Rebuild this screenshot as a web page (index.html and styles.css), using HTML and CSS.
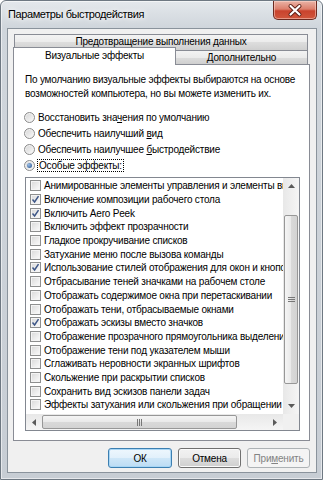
FILE: index.html
```html
<!DOCTYPE html>
<html lang="ru">
<head>
  <meta charset="UTF-8">
  <title>Параметры быстродействия</title>
  <link rel="stylesheet" href="styles.css">
</head>
<body>
  <div class="window">
    <div class="titlebar">
      <span class="title">Параметры быстродействия</span>
      <div class="close">
        <svg width="44" height="19" viewBox="0 0 44 19">
          <path d="M17.5 5 L26.5 13.5 M26.5 5 L17.5 13.5" stroke="#5a1d14" stroke-width="4" stroke-linecap="round"/>
          <path d="M17.5 5 L26.5 13.5 M26.5 5 L17.5 13.5" stroke="#fff" stroke-width="2.2" stroke-linecap="round"/>
        </svg>
      </div>
    </div>

    <div class="client">
      <div class="tabs">
        <div class="tab back">Предотвращение выполнения данных</div>
        <div class="tab-row">
          <div class="tab active">Визуальные эффекты</div>
          <div class="tab side">Дополнительно</div>
        </div>
      </div>

      <div class="panel">
        <p class="intro">По умолчанию визуальные эффекты выбираются на основе<br>возможностей компьютера, но вы можете изменить их.</p>

        <div class="radios">
          <div class="radio"><span class="dot"></span><span>Восстановить зна<u>ч</u>ения по умолчанию</span></div>
          <div class="radio"><span class="dot"></span><span>Обеспечить наилучший <u>в</u>ид</span></div>
          <div class="radio"><span class="dot"></span><span>Обеспечить наилучшее <u>б</u>ыстродействие</span></div>
          <div class="radio on"><span class="dot"></span><span class="focus">Особые эффекты:</span></div>
        </div>

        <div class="list">
          <div class="list-main">
            <div class="items" id="items"></div>
            <div class="vscroll">
              <div class="arrow"><svg width="7" height="4" viewBox="0 0 7 4"><polygon points="0,4 3.5,0 7,4" fill="#5a5a5a"/></svg></div>
              <div class="track">
                <div class="thumb vthumb">
                  <svg width="7" height="5" viewBox="0 0 7 5"><path d="M0 0.5H7M0 2.5H7M0 4.5H7" stroke="#777" stroke-width="1"/></svg>
                </div>
              </div>
              <div class="arrow"><svg width="7" height="4" viewBox="0 0 7 4"><polygon points="0,0 7,0 3.5,4" fill="#5a5a5a"/></svg></div>
            </div>
          </div>
          <div class="hscroll">
            <div class="arrow"><svg width="4" height="7" viewBox="0 0 4 7"><polygon points="4,0 4,7 0,3.5" fill="#5a5a5a"/></svg></div>
            <div class="track">
              <div class="thumb hthumb">
                <svg width="5" height="7" viewBox="0 0 5 7"><path d="M0.5 0V7M2.5 0V7M4.5 0V7" stroke="#777" stroke-width="1"/></svg>
              </div>
            </div>
            <div class="arrow"><svg width="4" height="7" viewBox="0 0 4 7"><polygon points="0,0 4,3.5 0,7" fill="#5a5a5a"/></svg></div>
            <div class="corner"></div>
          </div>
        </div>
      </div>

      <div class="buttons">
        <button class="btn default">ОК</button>
        <button class="btn">Отмена</button>
        <button class="btn" disabled>При<u>м</u>енить</button>
      </div>
    </div>
  </div>

  <script>
    const effects = [
      { t: "Анимированные элементы управления и элементы внутри окна", on: false },
      { t: "Включение композиции рабочего стола", on: true },
      { t: "Включить Aero Peek", on: true },
      { t: "Включить эффект прозрачности", on: false },
      { t: "Гладкое прокручивание списков", on: false },
      { t: "Затухание меню после вызова команды", on: false },
      { t: "Использование стилей отображения для окон и кнопок", on: true },
      { t: "Отбрасывание теней значками на рабочем столе", on: false },
      { t: "Отображать содержимое окна при перетаскивании", on: false },
      { t: "Отображать тени, отбрасываемые окнами", on: false },
      { t: "Отображать эскизы вместо значков", on: true },
      { t: "Отображение прозрачного прямоугольника выделения", on: false },
      { t: "Отображение тени под указателем мыши", on: false },
      { t: "Сглаживать неровности экранных шрифтов", on: false },
      { t: "Скольжение при раскрытии списков", on: false },
      { t: "Сохранить вид эскизов панели задач", on: false },
      { t: "Эффекты затухания или скольжения при обращении к меню", on: false }
    ];

    const tick = '<svg width="9" height="9" viewBox="0 0 9 9"><path d="M1.5 4.5 L3.6 7 L7.5 1.2" stroke="#3d5687" stroke-width="1.5" fill="none"/></svg>';
    const list = document.getElementById('items');
    effects.forEach(e => {
      const row = document.createElement('div');
      row.className = 'item';
      row.innerHTML = `<span class="box">${e.on ? tick : ''}</span><span class="label">${e.t}</span>`;
      list.appendChild(row);
    });
  </script>
</body>
</html>
```

FILE: styles.css
```css
* {
  box-sizing: border-box;
}
body {
  margin: 0;
  font-family: "Liberation Sans", Arial, sans-serif;
  font-size: 10px;
  letter-spacing: -0.2px;
  color: #000;
  background: #fff;
}
.window {
  width: 323px;
  height: 480px;
  border: 1px solid #6e7882;
  border-radius: 6px 6px 0 0;
  background: linear-gradient(180deg, #e4e8ec 0, #d0d6dc 26px, #c7cdd4 100%);
  box-shadow: inset 0 0 0 1px rgba(255,255,255,0.55);
  padding: 0 5px 6px 6px;
  display: flex;
  flex-direction: column;
}
.titlebar {
  height: 27px;
  display: flex;
  align-items: flex-start;
}
.title {
  margin: 6px 0 0 1px;
  font-size: 11px;
  line-height: 14px;
  letter-spacing: -0.4px;
  text-shadow: 0 0 5px #fff, 0 0 8px #fff;
}
.close {
  margin-left: auto;
  width: 44px;
  height: 19px;
  border: 1px solid #6c2a20;
  border-top: none;
  border-radius: 0 0 5px 5px;
  background: linear-gradient(180deg, #eab3a6 0, #dc7f6c 45%, #c9432d 55%, #d0563c 100%);
  box-shadow: inset 0 0 0 1px rgba(255,220,210,0.5);
}
.close svg {
  display: block;
  margin-left: -1px;
}

.client {
  flex: 1;
  border: 1px solid #8a939c;
  background: #f0f0f0;
  padding: 5px 6px 0 5px;
  display: flex;
  flex-direction: column;
}

/* tabs */
.tab {
  border: 1px solid #898c95;
  border-bottom: none;
  background: linear-gradient(180deg, #f3f3f3 0, #ebebeb 50%, #dddddd 50%, #cfcfcf 100%);
  text-align: center;
  white-space: nowrap;
}
.tab.back {
  height: 16px;
  margin: 0 2px 0 1px;
  line-height: 14px;
}
.tab-row {
  height: 14px;
  display: flex;
  align-items: flex-end;
}
.tab.active {
  position: relative;
  z-index: 1;
  width: 163px;
  height: 18px;
  margin-bottom: -1px;
  background: #fff;
  line-height: 15px;
}
.tab.side {
  width: 133px;
  height: 14px;
  margin-left: -1px;
  line-height: 14px;
}

/* panel */
.panel {
  height: 377px;
  border: 1px solid #898c95;
  background: #fff;
  padding: 8px 9px 0 11px;
}
.intro {
  margin: 0;
  line-height: 14px;
  white-space: nowrap;
}
.radios {
  margin-top: 8px;
}
.radio {
  height: 16px;
  display: flex;
  align-items: center;
  white-space: nowrap;
}
.dot {
  flex: none;
  width: 11px;
  height: 11px;
  margin: 0 3px 0 -1px;
  border: 1px solid #8b8b8b;
  border-radius: 50%;
  background: linear-gradient(135deg, #d4d4d4, #fbfbfb);
  box-shadow: inset 0 0 0 1px #f3f3f3;
  display: flex;
  align-items: center;
  justify-content: center;
}
.radio.on .dot::after {
  content: "";
  width: 5px;
  height: 5px;
  border-radius: 50%;
  background: radial-gradient(circle at 35% 35%, #9ec0e6, #1f4d8c);
}
.focus {
  outline: 1px dotted #000;
  outline-offset: 0;
  padding: 0 1px;
}
u {
  text-decoration-thickness: 1px;
  text-underline-offset: 1px;
}

/* list */
.list {
  margin-top: 4px;
  height: 254px;
  border: 1px solid #828790;
  display: flex;
  flex-direction: column;
}
.list-main {
  height: 236px;
  display: flex;
}
.items {
  flex: 1;
  min-width: 0;
  padding-top: 1px;
  overflow: hidden;
}
.item {
  height: 13.7px;
  display: flex;
  align-items: center;
  white-space: nowrap;
}
.box {
  flex: none;
  width: 11px;
  height: 11px;
  margin: 0 3px 0 4px;
  border: 1px solid #8e8f8f;
  background: linear-gradient(135deg, #d8d8d8, #fcfcfc);
  box-shadow: inset 0 0 0 1px #f4f4f4;
  display: flex;
  align-items: center;
  justify-content: center;
}
.box svg {
  display: block;
}

/* scrollbars */
.vscroll {
  width: 16px;
  display: flex;
  flex-direction: column;
  background: linear-gradient(90deg, #e8e8e8, #f5f5f5);
}
.vscroll .arrow {
  height: 16px;
}
.vscroll .track {
  flex: 1;
}
.arrow {
  display: flex;
  align-items: center;
  justify-content: center;
}
.thumb {
  border: 1px solid #979797;
  border-radius: 2px;
  display: flex;
  align-items: center;
  justify-content: center;
}
.vthumb {
  margin: 21px 0 0 1px;
  width: 14px;
  height: 169px;
  background: linear-gradient(90deg, #f5f5f5, #e9e9e9 50%, #d9d9d9 50%, #d3d3d3);
}
.hscroll {
  height: 16px;
  display: flex;
  background: linear-gradient(180deg, #e8e8e8, #f5f5f5);
}
.hscroll .arrow {
  width: 16px;
}
.hscroll .track {
  flex: 1;
}
.hthumb {
  width: 195px;
  height: 14px;
  margin-top: 1px;
  background: linear-gradient(180deg, #f5f5f5, #e9e9e9 50%, #d9d9d9 50%, #d3d3d3);
}
.corner {
  width: 16px;
  background: #f0f0f0;
}

/* buttons */
.buttons {
  margin-top: 7px;
  display: flex;
  justify-content: flex-end;
  gap: 6px;
}
.btn {
  width: 63px;
  height: 20px;
  padding: 0;
  font-family: inherit;
  font-size: 10px;
  letter-spacing: -0.2px;
  color: #000;
  border: 1px solid #707070;
  border-radius: 3px;
  background: linear-gradient(180deg, #f2f2f2 0, #ebebeb 50%, #dddddd 50%, #cfcfcf 100%);
  box-shadow: inset 0 0 0 1px #fbfbfb;
}
.btn.default {
  width: 64px;
  border-color: #3c7fb1;
  background: linear-gradient(180deg, #eef7fd 0, #e1f0fb 50%, #cfe7f8 50%, #bcdcf4 100%);
  box-shadow: inset 0 0 0 1px #a8d6f5;
}
.btn:disabled {
  border-color: #adb2b5;
  background: #f4f4f4;
  box-shadow: none;
  color: #838383;
}
```
